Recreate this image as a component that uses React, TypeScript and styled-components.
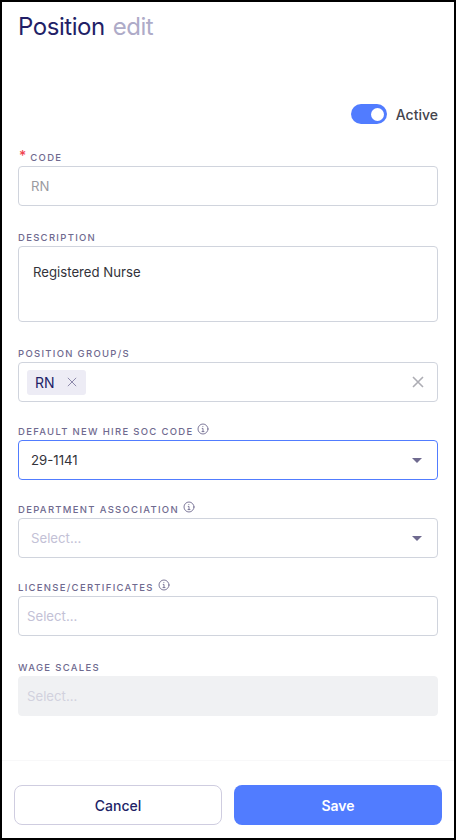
import * as React from 'react';
import styled, { createGlobalStyle } from 'styled-components';

const Global = createGlobalStyle`
  html, body { margin: 0; padding: 0; background: #fff; }
  body { font-family: Inter, "Liberation Sans", sans-serif; }
  * { box-sizing: border-box; }
`;

const InfoIcon = () => (
  <InfoSvg viewBox="0 0 12 12" fill="none" stroke="#6f6a8f" strokeWidth="0.9" strokeLinecap="round">
    <circle cx="6" cy="6" r="5" />
    <path d="M5.2 5.4H6V8.4M5 8.6H7" />
    <circle cx="5.9" cy="3.5" r="0.5" fill="#6f6a8f" stroke="none" />
  </InfoSvg>
);

const Cross = ({ size, color, width }: { size: number; color: string; width: number }) => (
  <svg width={size} height={size} viewBox="0 0 12 12" fill="none" stroke={color} strokeWidth={width}>
    <path d="M1 1L11 11M11 1L1 11" />
  </svg>
);

export default function App() {
  return (
    <Page>
      <Global />
      <Scroll>
        <Heading>
          Position<HeadingMuted>edit</HeadingMuted>
        </Heading>
        <ToggleRow>
          <Toggle>
            <Knob />
          </Toggle>
          <ToggleLabel>Active</ToggleLabel>
        </ToggleRow>

        <Label $mt={26}>
          <Required>*</Required>CODE
        </Label>
        <Control>
          <Value $color="#9a9a9f">RN</Value>
        </Control>

        <Label $mt={24}>DESCRIPTION</Label>
        <Control $height={76} $align="flex-start" $pad={14}>
          <Value $color="#33333a" $top={17}>Registered Nurse</Value>
        </Control>

        <Label $mt={24}>POSITION GROUP/S</Label>
        <Control $pad={8}>
          <Chip>
            <ChipText>RN</ChipText>
            <Cross size={10} color="#8d89ab" width={1.2} />
          </Chip>
          <ClearSlot>
            <Cross size={12} color="#adadb4" width={1.6} />
          </ClearSlot>
        </Control>

        <Label $mt={22}>
          DEFAULT NEW HIRE SOC CODE
          <InfoIcon />
        </Label>
        <Control $focused>
          <Value $color="#33333a">29-1141</Value>
          <Caret />
        </Control>

        <Label $mt={22}>
          DEPARTMENT ASSOCIATION
          <InfoIcon />
        </Label>
        <Control>
          <Value $color="#c3c1d6">Select...</Value>
          <Caret />
        </Control>

        <Label $mt={22}>
          LICENSE/CERTIFICATES
          <InfoIcon />
        </Label>
        <Control $pad={8}>
          <Value $color="#c3c1d6">Select...</Value>
        </Control>

        <Label $mt={24}>WAGE SCALES</Label>
        <Control $disabled $pad={8}>
          <Value $color="#d2d1de">Select...</Value>
        </Control>
      </Scroll>
      <Footer>
        <CancelButton>Cancel</CancelButton>
        <SaveButton>Save</SaveButton>
      </Footer>
    </Page>
  );
}

const Page = styled.div`
  width: 456px;
  height: 840px;
  border: 2px solid #000;
  background: #fff;
  display: flex;
  flex-direction: column;
  overflow: hidden;
`;
const Scroll = styled.div`
  flex: 1;
  padding: 10px 16px 0 16px;
`;
const Heading = styled.div`
  font-size: 24px;
  line-height: 29px;
  letter-spacing: -0.45px;
  color: #221f67;
`;
const HeadingMuted = styled.span`
  color: #aeabc8;
  margin-left: 8px;
`;
const ToggleRow = styled.div`
  display: flex;
  justify-content: flex-end;
  align-items: center;
  gap: 9px;
  margin-top: 63px;
  height: 20px;
`;
const Toggle = styled.div`
  width: 36px;
  height: 20px;
  border-radius: 10px;
  background: #517cff;
  display: flex;
  align-items: center;
  justify-content: flex-end;
  padding-right: 3px;
`;
const Knob = styled.div`
  width: 13px;
  height: 13px;
  border-radius: 50%;
  background: #fff;
`;
const ToggleLabel = styled.span`
  font-size: 14px;
  font-weight: 500;
  color: #44444c;
`;
const Label = styled.div<{ $mt: number }>`
  display: flex;
  align-items: center;
  height: 14px;
  margin-top: ${(p) => p.$mt}px;
  margin-bottom: 2px;
  font-size: 9.5px;
  font-weight: 500;
  letter-spacing: 1.3px;
  color: #6f6a8f;
`;
const Required = styled.span`
  color: #f0444f;
  font-size: 14px;
  line-height: 14px;
  margin-right: 4px;
  margin-top: -2px;
  margin-left: 1px;
  letter-spacing: 0;
`;
const InfoSvg = styled.svg`
  width: 12px;
  height: 12px;
  margin-left: 4px;
  margin-top: -4px;
`;
const Control = styled.div<{
  $height?: number;
  $align?: string;
  $focused?: boolean;
  $disabled?: boolean;
  $pad?: number;
}>`
  display: flex;
  align-items: ${(p) => p.$align || 'center'};
  justify-content: space-between;
  height: ${(p) => p.$height || 40}px;
  padding: 0 19px 0 ${(p) => p.$pad || 12}px;
  border-radius: 4px;
  border: 1px solid ${(p) => (p.$focused ? '#517cff' : p.$disabled ? '#f0f1f3' : '#d0d4dd')};
  background: ${(p) => (p.$disabled ? '#f0f1f3' : '#fff')};
`;
const Value = styled.span<{ $color: string; $top?: number }>`
  font-size: 13.2px;
  color: ${(p) => p.$color};
  margin-top: ${(p) => p.$top || 0}px;
`;
const Chip = styled.div`
  display: flex;
  align-items: center;
  gap: 12px;
  height: 25px;
  padding: 0 9px 0 8px;
  border-radius: 3px;
  background: #edecf5;
`;
const ChipText = styled.span`
  font-size: 14px;
  font-weight: 400;
  color: #221f67;
`;
const ClearSlot = styled.div`
  display: flex;
  align-items: center;
  margin-right: -6px;
`;
const Caret = styled.div`
  width: 0;
  height: 0;
  margin-right: -4px;
  border-left: 5.5px solid transparent;
  border-right: 5.5px solid transparent;
  border-top: 5.5px solid #6f6a8f;
`;
const Footer = styled.div`
  display: flex;
  gap: 12px;
  height: 78px;
  padding: 24px 12px 0 12px;
  border-top: 1px solid #f8f8f9;
`;
const CancelButton = styled.button`
  width: 208px;
  height: 40px;
  border-radius: 8px;
  border: 1px solid #cfcde0;
  background: #fff;
  color: #221f67;
  font-family: inherit;
  font-size: 14px;
  font-weight: 500;
`;
const SaveButton = styled.button`
  width: 208px;
  height: 40px;
  border-radius: 8px;
  border: none;
  background: #517cff;
  color: #fff;
  font-family: inherit;
  font-size: 14px;
  font-weight: 600;
`;
